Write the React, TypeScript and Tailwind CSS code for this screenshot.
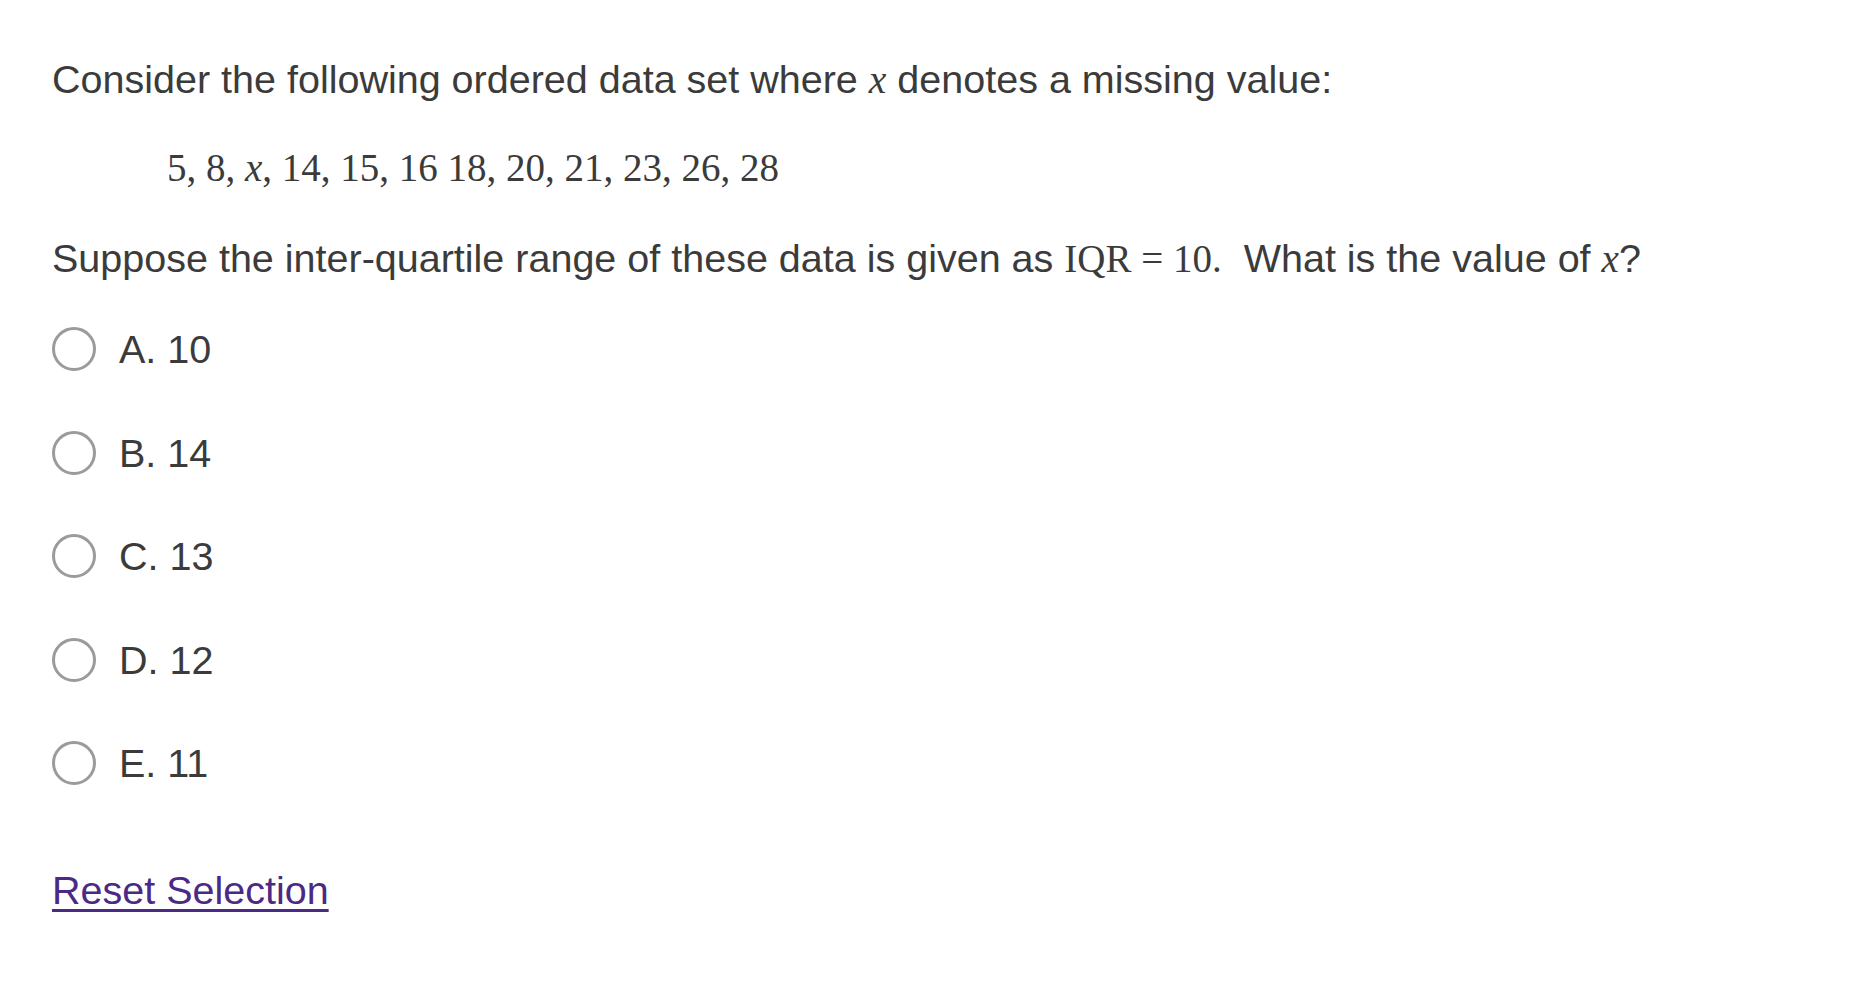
import { useState } from "react";

const options = [
  { id: "A", label: "A. 10" },
  { id: "B", label: "B. 14" },
  { id: "C", label: "C. 13" },
  { id: "D", label: "D. 12" },
  { id: "E", label: "E. 11" },
];

const serif = { fontFamily: '"Liberation Serif", "Times New Roman", serif' };

export default function App() {
  const [picked, setPicked] = useState<string | null>(null);

  return (
    <div className="min-h-screen bg-white pl-[52px] pt-[49px] text-[39.5px] leading-[60px] text-[#3b3b3b] [font-family:'Liberation_Sans',Arial,sans-serif]">
      <p>
        Consider the following ordered data set where{" "}
        <i className="[font-family:'Liberation_Serif',serif]">x</i> denotes a missing value:
      </p>

      {/* data row */}
      <p className="mt-[28px] pl-[115px] text-[39px]" style={serif}>
        5, 8, <i>x</i>, 14, 15, 16 18, 20, 21, 23, 26, 28
      </p>

      <p className="mt-[30px]">
        Suppose the inter-quartile range of these data is given as{" "}
        <span className="text-[39px]" style={serif}>
          IQR = 10.
        </span>{" "}
        &nbsp;What is the value of <i className="text-[39px]" style={serif}>x</i>?
      </p>

      <div className="mt-[30px] flex flex-col gap-[43.5px]">
        {options.map((o) => (
          <label key={o.id} className="flex h-[60px] cursor-pointer items-center gap-[23px]">
            <span className="flex h-[44px] w-[44px] items-center justify-center rounded-full border-[3px] border-[#9b9b9b] bg-white">
              {picked === o.id && <span className="h-[22px] w-[22px] rounded-full bg-[#3b3b3b]" />}
            </span>
            <input
              type="radio"
              name="answer"
              className="hidden"
              checked={picked === o.id}
              onChange={() => setPicked(o.id)}
            />
            <span>{o.label}</span>
          </label>
        ))}
      </div>

      <div className="mt-[67px]">
        <a
          href="#"
          onClick={(e) => {
            e.preventDefault();
            setPicked(null);
          }}
          className="text-[#4b2a85] underline decoration-[3px] underline-offset-[5px]"
        >
          Reset Selection
        </a>
      </div>
    </div>
  );
}
